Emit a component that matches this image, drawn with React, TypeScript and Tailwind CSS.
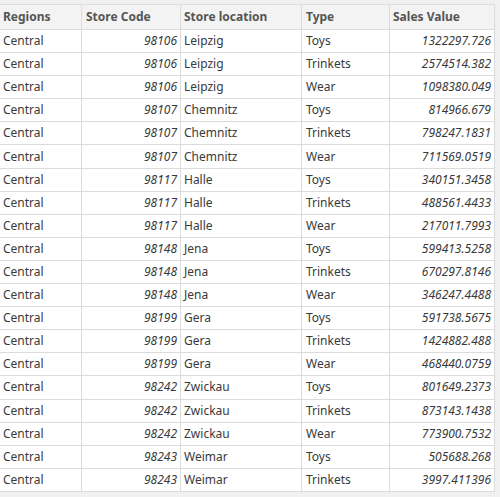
import React from "react";

type Row = { region: string; code: string; location: string; type: string; sales: string };

const rows: Row[] = [
  { region: "Central", code: "98106", location: "Leipzig", type: "Toys", sales: "1322297.726" },
  { region: "Central", code: "98106", location: "Leipzig", type: "Trinkets", sales: "2574514.382" },
  { region: "Central", code: "98106", location: "Leipzig", type: "Wear", sales: "1098380.049" },
  { region: "Central", code: "98107", location: "Chemnitz", type: "Toys", sales: "814966.679" },
  { region: "Central", code: "98107", location: "Chemnitz", type: "Trinkets", sales: "798247.1831" },
  { region: "Central", code: "98107", location: "Chemnitz", type: "Wear", sales: "711569.0519" },
  { region: "Central", code: "98117", location: "Halle", type: "Toys", sales: "340151.3458" },
  { region: "Central", code: "98117", location: "Halle", type: "Trinkets", sales: "488561.4433" },
  { region: "Central", code: "98117", location: "Halle", type: "Wear", sales: "217011.7993" },
  { region: "Central", code: "98148", location: "Jena", type: "Toys", sales: "599413.5258" },
  { region: "Central", code: "98148", location: "Jena", type: "Trinkets", sales: "670297.8146" },
  { region: "Central", code: "98148", location: "Jena", type: "Wear", sales: "346247.4488" },
  { region: "Central", code: "98199", location: "Gera", type: "Toys", sales: "591738.5675" },
  { region: "Central", code: "98199", location: "Gera", type: "Trinkets", sales: "1424882.488" },
  { region: "Central", code: "98199", location: "Gera", type: "Wear", sales: "468440.0759" },
  { region: "Central", code: "98242", location: "Zwickau", type: "Toys", sales: "801649.2373" },
  { region: "Central", code: "98242", location: "Zwickau", type: "Trinkets", sales: "873143.1438" },
  { region: "Central", code: "98242", location: "Zwickau", type: "Wear", sales: "773900.7532" },
  { region: "Central", code: "98243", location: "Weimar", type: "Toys", sales: "505688.268" },
  { region: "Central", code: "98243", location: "Weimar", type: "Trinkets", sales: "3997.411396" },
];

const cell = "box-border border-r border-[#dcdcdc] px-[3px] flex items-center overflow-hidden whitespace-nowrap";

export default function App() {
  return (
    <div
      className="w-[500px] h-[497px] bg-[#f0f0f0] pt-[4px] text-[12px] text-[#3a3a3a] overflow-hidden"
      style={{ fontFamily: '"Noto Sans", "Open Sans", sans-serif' }}
    >
      <div className="w-[495px] bg-white">
        {/* header */}
        <div className="flex h-[26px] box-border border-y border-[#dcdcdc] bg-[#f3f3f3] font-bold text-[#555]">
          <div className={`${cell} w-[82px]`}>Regions</div>
          <div className={`${cell} w-[99px] pl-[4px]`}>Store Code</div>
          <div className={`${cell} w-[121px] pl-[3px]`}>Store location</div>
          <div className={`${cell} w-[88px] pl-[4px]`}>Type</div>
          <div className={`${cell} w-[105px] pl-[3px]`}>Sales Value</div>
        </div>
        {rows.map((r, i) => (
          <div key={i} className="flex h-[23.1px] box-border border-b border-[#dcdcdc]">
            <div className={`${cell} w-[82px]`}>{r.region}</div>
            <div className={`${cell} w-[99px] justify-end italic`}>{r.code}</div>
            <div className={`${cell} w-[121px]`}>{r.location}</div>
            <div className={`${cell} w-[88px] pl-[4px]`}>{r.type}</div>
            <div className={`${cell} w-[105px] justify-end italic`}>{r.sales}</div>
          </div>
        ))}
      </div>
    </div>
  );
}
